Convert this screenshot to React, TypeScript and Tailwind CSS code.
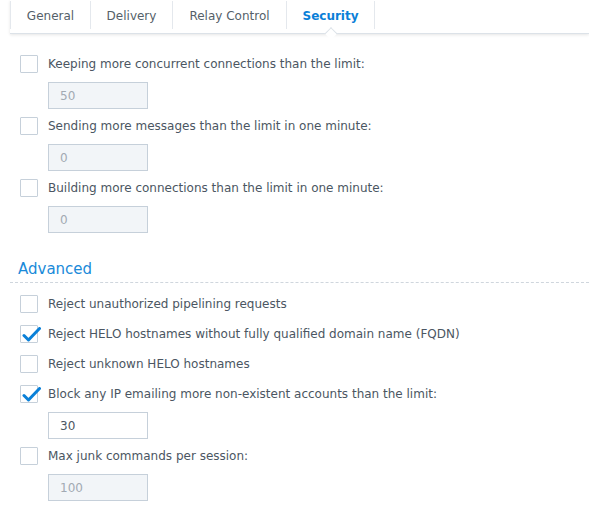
import React from 'react';

type Item = {
  label: string;
  checked?: boolean;
  value?: string;
  disabled?: boolean;
};

const limits: Item[] = [
  { label: 'Keeping more concurrent connections than the limit:', value: '50', disabled: true },
  { label: 'Sending more messages than the limit in one minute:', value: '0', disabled: true },
  { label: 'Building more connections than the limit in one minute:', value: '0', disabled: true },
];

const advanced: Item[] = [
  { label: 'Reject unauthorized pipelining requests' },
  { label: 'Reject HELO hostnames without fully qualified domain name (FQDN)', checked: true },
  { label: 'Reject unknown HELO hostnames' },
  { label: 'Block any IP emailing more non-existent accounts than the limit:', checked: true, value: '30' },
  { label: 'Max junk commands per session:', value: '100', disabled: true },
];

const tabs = [
  { name: 'General', width: 'w-[79px]' },
  { name: 'Delivery', width: 'w-[81px]' },
  { name: 'Relay Control', width: 'w-[113px]' },
  { name: 'Security', width: 'w-[87px]', active: true },
];

const Checkbox: React.FC<{ checked?: boolean }> = ({ checked }) => (
  <div className="relative w-[18px] h-[18px] shrink-0 border border-[#c6d0da] bg-white rounded-[1px]">
    {checked && (
      <svg
        className="absolute left-[1px] top-[1px]"
        width="19"
        height="16"
        viewBox="0 0 19 16"
        fill="none"
      >
        <path
          d="M2 8.5 L6.5 13 L17.5 1.5"
          stroke="#0a80d8"
          strokeWidth="3"
          strokeLinecap="round"
          strokeLinejoin="round"
        />
      </svg>
    )}
  </div>
);

const Row: React.FC<{ item: Item }> = ({ item }) => (
  <div>
    <div className="h-[30px] flex items-center gap-[10px]">
      <Checkbox checked={item.checked} />
      <span className="whitespace-nowrap">{item.label}</span>
    </div>
    {item.value !== undefined && (
      <div
        className={`ml-[28px] mt-[3px] mb-[2px] w-[100px] h-[27px] flex items-center px-[11px] border border-[#c6d0da] ${
          item.disabled ? 'bg-[#f2f5f8] text-[#a2aab3]' : 'bg-white text-[#4b5662]'
        }`}
      >
        {item.value}
      </div>
    )}
  </div>
);

export default function App() {
  return (
    <div className="w-[589px] h-[511px] overflow-hidden bg-white font-['DejaVu_Sans',Verdana,sans-serif] text-[12px] text-[#4b5662]">
      <div className="relative ml-[10px] h-[34px] flex items-start border-b border-[#dce2e8] shadow-[0_1px_3px_rgba(0,0,0,0.10)]">
        <div className="w-px h-[28px] mt-[1px] bg-[#e4e8ed]" />
        {tabs.map((tab) => (
          <React.Fragment key={tab.name}>
            <div
              className={`relative ${tab.width} h-[33px] flex items-center justify-center pb-[1px] ${
                tab.active ? 'font-bold text-[#0a80d8]' : 'text-[#555f69]'
              }`}
            >
              {tab.name}
              {tab.active && (
                <div className="absolute left-1/2 -translate-x-1/2 bottom-[-5px] w-[9px] h-[9px] rotate-45 border-t border-l border-[#dce2e8] bg-white" />
              )}
            </div>
            <div className="w-px h-[28px] mt-[1px] bg-[#e4e8ed]" />
          </React.Fragment>
        ))}
      </div>

      <div className="pl-[20px] pt-[15px]">
        {limits.map((item) => (
          <Row key={item.label} item={item} />
        ))}

        <div className="-ml-[10px] mt-[26px] pl-[8px] pb-[3px] border-b border-dashed border-[#cfd6dd]">
          <div className="h-[20px] flex items-center text-[15px] text-[#1a8ad9]">Advanced</div>
        </div>

        <div className="mt-[6px]">
          {advanced.map((item) => (
            <Row key={item.label} item={item} />
          ))}
        </div>
      </div>
    </div>
  );
}
